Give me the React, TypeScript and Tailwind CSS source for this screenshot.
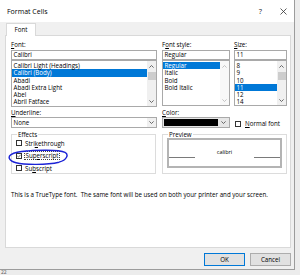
import React from "react";

function Chev({ up }: { up?: boolean }) {
  return (
    <svg width="5" height="3" viewBox="0 0 5 3" className="block">
      <path
        d={up ? "M0.4 2.6L2.5 0.5L4.6 2.6" : "M0.4 0.4L2.5 2.5L4.6 0.4"}
        fill="none"
        stroke="#5a5a5a"
        strokeWidth="0.9"
      />
    </svg>
  );
}

function Scrollbar({ thumb, disabled }: { thumb?: boolean; disabled?: boolean }) {
  return (
    <div className={`w-[9px] h-full bg-[#f0f0f0] flex flex-col items-center ${disabled ? "opacity-40" : ""}`}>
      <div className="h-[10px] w-full flex items-center justify-center">
        <Chev up />
      </div>
      {thumb ? <div className="mt-[1px] w-[8px] h-[8px] bg-[#cdcdcd]" /> : null}
      <div className="flex-1" />
      <div className="h-[10px] w-full flex items-center justify-center">
        <Chev />
      </div>
    </div>
  );
}

function ListBox({
  items,
  selected,
  thumb,
  disabled,
  h,
}: {
  items: string[];
  selected: string;
  thumb?: boolean;
  disabled?: boolean;
  h: string;
}) {
  return (
    <div className={`${h} border border-[#a9a9a9] bg-white flex`}>
      <div className="flex-1 pt-[1px] overflow-hidden">
        {items.map((it) => (
          <div
            key={it}
            className={`h-[7.3px] leading-[7.3px] px-[1.5px] whitespace-nowrap ${
              it === selected ? "bg-[#0078d7] text-white" : ""
            }`}
          >
            {it}
          </div>
        ))}
      </div>
      <Scrollbar thumb={thumb} disabled={disabled} />
    </div>
  );
}

function Input({ value }: { value: string }) {
  return (
    <div className="h-[10px] border border-[#a9a9a9] bg-white px-[1.5px] leading-[8px]">{value}</div>
  );
}

function CheckBox({ checked }: { checked?: boolean }) {
  return (
    <div className="w-[6px] h-[6px] border border-[#333333] bg-white flex items-center justify-center shrink-0">
      {checked ? (
        <svg width="5" height="4" viewBox="0 0 5 4" className="block">
          <path d="M0.4 2L1.8 3.4L4.6 0.4" fill="none" stroke="#222" strokeWidth="0.8" />
        </svg>
      ) : null}
    </div>
  );
}

export default function App() {
  return (
    <div className="w-[300px] h-[275px] overflow-hidden bg-[#ececec] font-['Open_Sans','Noto_Sans',sans-serif] text-black text-[6.2px]">
      <div className="w-[295px] h-[270px] bg-[#f0f0f0] border-r border-b border-[#9c9c9c] flex flex-col">
        {/* title bar */}
        <div className="h-[22px] bg-white flex items-center shrink-0">
          <span className="ml-[7px] text-[7px] leading-[9px]">Format Cells</span>
          <span className="ml-auto text-[7.5px] leading-[9px] text-[#222]">?</span>
          <svg width="7" height="7" viewBox="0 0 7 7" className="ml-[18px] mr-[7px] block">
            <path d="M0.5 0.5L6.5 6.5M6.5 0.5L0.5 6.5" stroke="#333" strokeWidth="0.8" />
          </svg>
        </div>

        {/* tab strip */}
        <div className="h-[13px] pl-[6px] flex items-end shrink-0">
          <div className="w-[30px] h-[13px] bg-white border border-b-0 border-[#d9d9d9] flex items-center justify-center leading-[8px] relative top-[1px]">
            Font
          </div>
        </div>

        {/* panel */}
        <div className="ml-[5px] w-[286px] h-[213px] bg-white border border-[#d9d9d9] pl-[5px] pt-[4px] shrink-0">
          {/* row 1 */}
          <div className="flex">
            <div className="w-[146px]">
              <div className="h-[9px] leading-[9px] mb-[1px]">
                <span className="underline">F</span>ont:
              </div>
              <Input value="Calibri" />
              <ListBox
                h="h-[47px]"
                thumb
                selected="Calibri (Body)"
                items={[
                  "Calibri Light (Headings)",
                  "Calibri (Body)",
                  "Abadi",
                  "Abadi Extra Light",
                  "Abel",
                  "Abril Fatface",
                ]}
              />
            </div>
            <div className="w-[68px] ml-[5px]">
              <div className="h-[9px] leading-[9px] mb-[1px]">
                F<span className="underline">o</span>nt style:
              </div>
              <Input value="Regular" />
              <ListBox
                h="h-[46px]"
                disabled
                selected="Regular"
                items={["Regular", "Italic", "Bold", "Bold Italic"]}
              />
            </div>
            <div className="w-[53px] ml-[4px]">
              <div className="h-[9px] leading-[9px] mb-[1px]">
                <span className="underline">S</span>ize:
              </div>
              <Input value="11" />
              <ListBox h="h-[46px]" thumb selected="11" items={["8", "9", "10", "11", "12", "14"]} />
            </div>
          </div>

          {/* row 2 */}
          <div className="flex mt-[1px]">
            <div className="w-[146px]">
              <div className="h-[9px] leading-[9px]">
                <span className="underline">U</span>nderline:
              </div>
              <div className="h-[11px] border border-[#a9a9a9] bg-white flex">
                <div className="flex-1 px-[1.5px] leading-[9px]">None</div>
                <div className="w-[9px] bg-[#f0f0f0] flex items-center justify-center">
                  <Chev />
                </div>
              </div>
            </div>
            <div className="w-[68px] ml-[5px]">
              <div className="h-[9px] leading-[9px]">
                <span className="underline">C</span>olor:
              </div>
              <div className="h-[11px] border border-[#a9a9a9] bg-[#e6e6e6] flex p-[1px]">
                <div className="flex-1 bg-black" />
                <div className="w-[10px] flex items-center justify-center">
                  <Chev />
                </div>
              </div>
            </div>
            <div className="ml-[5px] pt-[11px] flex items-center gap-[4px] h-[20px]">
              <CheckBox />
              <span>
                <span className="underline">N</span>ormal font
              </span>
            </div>
          </div>

          {/* row 3: groups */}
          <div className="flex mt-[3px]">
            <fieldset className="w-[145px] h-[43px] border border-[#dcdcdc] px-[4px] relative">
              <legend className="ml-[1px] px-[1px] leading-[7px]">Effects</legend>
              <div className="flex flex-col gap-[4.5px] pt-[1.5px]">
                <div className="flex items-center gap-[3px]">
                  <CheckBox />
                  <span className="leading-[7px]">
                    Stri<span className="underline">k</span>ethrough
                  </span>
                </div>
                <div className="flex items-center gap-[2px]">
                  <CheckBox checked />
                  <span className="leading-[7px] border border-dotted border-[#444] px-[0.5px]">
                    Sup<span className="underline">e</span>rscript
                  </span>
                </div>
                <div className="flex items-center gap-[3px]">
                  <CheckBox />
                  <span className="leading-[7px]">
                    Su<span className="underline">b</span>script
                  </span>
                </div>
              </div>
              <svg
                width="62"
                height="17"
                viewBox="0 0 62 17"
                className="absolute left-[-5px] top-[11px] pointer-events-none"
              >
                <path
                  d="M14 2.6 C30 0.8 52 0.6 58 3.4 C62 5.5 60 11 52 13.2 C40 16 18 16 9 13.8 C2 12 0.5 8 4 5.6 C8 3 13 2.4 20 2"
                  fill="none"
                  stroke="#1c23d6"
                  strokeWidth="1.4"
                  strokeLinecap="round"
                />
              </svg>
            </fieldset>
            <fieldset className="w-[125px] h-[43px] ml-[6px] border border-[#dcdcdc] px-[4px]">
              <legend className="ml-[1px] px-[1px] leading-[7px]">Preview</legend>
              <div className="h-[30px] border-2 border-[#b4b4b4] flex items-center relative">
                <div className="w-[26px] h-px bg-[#7a7a7a] mt-[9px]" />
                <div className="flex-1 text-center text-[5.5px] leading-[6px] mb-[2px]">calibri</div>
                <div className="w-[26px] h-px bg-[#7a7a7a] mt-[9px]" />
              </div>
            </fieldset>
          </div>

          <div className="mt-[17px] leading-[8px] whitespace-nowrap">
            This is a TrueType font.&nbsp; The same font will be used on both your printer and your screen.
          </div>
        </div>

        {/* buttons */}
        <div className="ml-[5px] w-[286px] mt-[5px] flex justify-end gap-[5px]">
          <div className="w-[41px] h-[13px] bg-[#e1e1e1] border border-[#0078d7] flex items-center justify-center leading-[8px]">
            OK
          </div>
          <div className="w-[41px] h-[13px] bg-[#e1e1e1] border border-[#adadad] flex items-center justify-center leading-[8px]">
            Cancel
          </div>
        </div>
      </div>
      <div className="h-[5px] pl-[1px] text-[5px] leading-[5px] text-[#555]">22</div>
    </div>
  );
}
